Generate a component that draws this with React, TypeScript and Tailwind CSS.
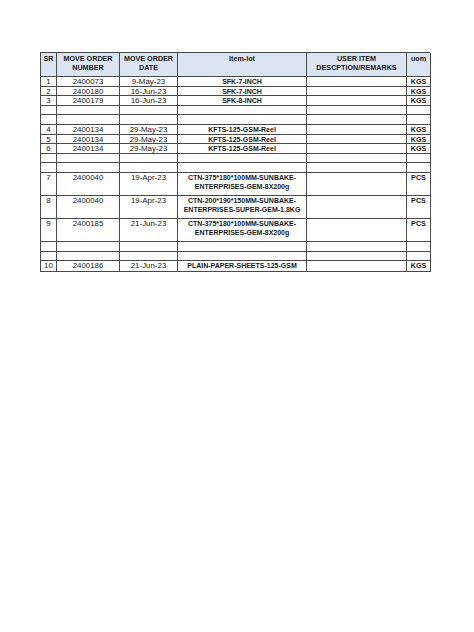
type Row = { sr?: string; num?: string; date?: string; item?: string[]; uom?: string; tall?: boolean };

const rows: Row[] = [
  { sr: '1', num: '2400073', date: '9-May-23', item: ['SFK-7-INCH'], uom: 'KGS' },
  { sr: '2', num: '2400180', date: '16-Jun-23', item: ['SFK-7-INCH'], uom: 'KGS' },
  { sr: '3', num: '2400179', date: '16-Jun-23', item: ['SFK-8-INCH'], uom: 'KGS' },
  {},
  {},
  { sr: '4', num: '2400134', date: '29-May-23', item: ['KFTS-125-GSM-Reel'], uom: 'KGS' },
  { sr: '5', num: '2400134', date: '29-May-23', item: ['KFTS-125-GSM-Reel'], uom: 'KGS' },
  { sr: '6', num: '2400134', date: '29-May-23', item: ['KFTS-125-GSM-Reel'], uom: 'KGS' },
  {},
  {},
  { sr: '7', num: '2400040', date: '19-Apr-23', item: ['CTN-375*180*100MM-SUNBAKE-', 'ENTERPRISES-GEM-8X200g'], uom: 'PCS', tall: true },
  { sr: '8', num: '2400040', date: '19-Apr-23', item: ['CTN-200*190*150MM-SUNBAKE-', 'ENTERPRISES-SUPER-GEM-1.8KG'], uom: 'PCS', tall: true },
  { sr: '9', num: '2400185', date: '21-Jun-23', item: ['CTN-375*180*100MM-SUNBAKE-', 'ENTERPRISES-GEM-8X200g'], uom: 'PCS', tall: true },
  {},
  {},
  { sr: '10', num: '2400186', date: '21-Jun-23', item: ['PLAIN-PAPER-SHEETS-125-GSM'], uom: 'KGS' },
];

const cell = 'border-r border-b border-[#4a4a4a] overflow-hidden whitespace-nowrap';
const head = `${cell} bg-[#dbe5f1] text-center pt-[1px] text-[7.2px]`;

export default function App() {
  return (
    <div className="w-[474px] h-[632px] bg-white pt-[52px] pl-[40px]" style={{ fontFamily: '"Liberation Sans", Arial, sans-serif' }}>
      <div className="grid grid-cols-[16px_63px_58px_129px_100px_24px] w-[390px] border-l border-t border-[#4a4a4a] text-[7.2px] font-bold text-[#1a1a1a] leading-[9px]">
        <div className={`${head} h-[24px]`}>SR</div>
        <div className={head}>MOVE ORDER<br />NUMBER</div>
        <div className={head}>MOVE ORDER<br />DATE</div>
        <div className={head}>Item-lot</div>
        <div className={head}>USER ITEM<br />DESCPTION/REMARKS</div>
        <div className={head}>uom</div>
        {rows.map((r, i) => {
          const h = r.tall ? 'h-[23px]' : i === rows.length - 1 ? 'h-[11px]' : 'h-[9.6px]';
          return (
            <div key={i} className="contents">
              <div className={`${cell} ${h} text-center font-normal text-[7.9px]`}>{r.sr}</div>
              <div className={`${cell} ${h} text-center font-normal text-[7.9px]`}>{r.num}</div>
              <div className={`${cell} ${h} text-center font-normal text-[7.9px]`}>{r.date}</div>
              <div className={`${cell} ${h} text-center text-[7px] leading-[9.5px]`}>
                {r.item?.map((t, j) => <div key={j}>{t}</div>)}
              </div>
              <div className={`${cell} ${h}`}></div>
              <div className={`${cell} ${h} text-center`}>{r.uom}</div>
            </div>
          );
        })}
      </div>
    </div>
  );
}
